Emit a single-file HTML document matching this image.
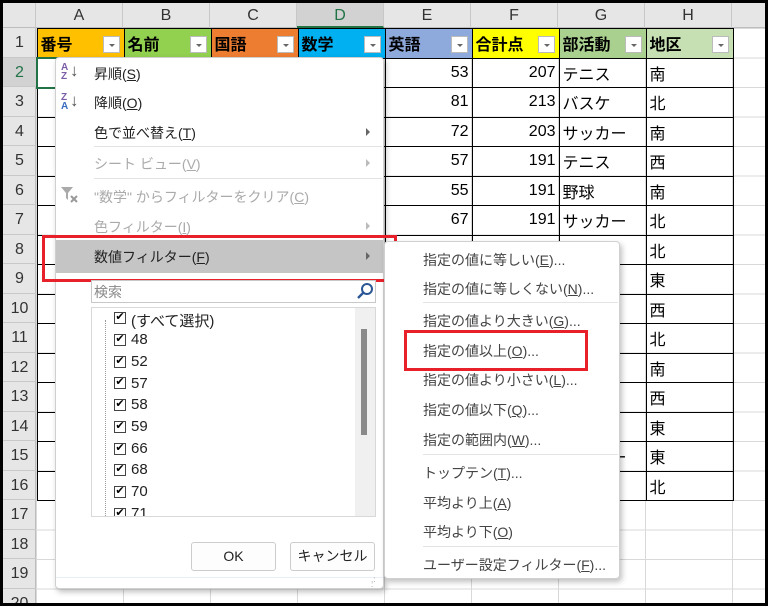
<!DOCTYPE html>
<html><head><meta charset="utf-8">
<style>
*{margin:0;padding:0;box-sizing:border-box}
body{width:768px;height:606px;overflow:hidden;background:#000;font-family:"Liberation Sans","Noto Sans CJK JP",sans-serif;position:relative}
.a{position:absolute}
#sheet{left:3px;top:3px;width:762px;height:600px;background:#fff;overflow:hidden}
#grid{left:33px;top:25px;width:740px;height:600px;
background-image:repeating-linear-gradient(to right,#d9d9d9 0 1px,transparent 1px 87px),repeating-linear-gradient(to bottom,#d9d9d9 0 1px,transparent 1px 29.5px);}
#colh{left:0;top:0;width:762px;height:25px;background:#e6e6e6;border-bottom:1px solid #bdbdbd}
.ch{position:absolute;top:0;height:25px;width:87px;text-align:center;font-size:16px;line-height:25px;color:#333;border-right:1px solid #c8c8c8}
#rowh{left:0;top:25px;width:33px;height:600px;background:#e6e6e6;border-right:1px solid #bdbdbd}
.rh{position:absolute;left:0;width:33px;height:29.5px;text-align:center;font-size:16px;line-height:29px;color:#333;border-bottom:1px solid #c8c8c8}
table{position:absolute;left:33px;top:25px;border-collapse:collapse;table-layout:fixed}
td{width:87px;height:29.5px;border:1px solid #000;font-size:16px;padding:0 3px;white-space:nowrap;overflow:hidden}
td.n{text-align:right}
tr.h td{font-weight:bold;position:relative}
.dd{position:absolute;right:4px;top:7px;width:17px;height:17px;background:#fff;border:1px solid #bbb}
.dd:after{content:"";position:absolute;left:5px;top:7px;border-left:3px solid transparent;border-right:3px solid transparent;border-top:3px solid #666}
.menu{background:#fff;border:1px solid #d0d0d0;border-radius:4px;box-shadow:2px 3px 6px rgba(0,0,0,.25)}
.mi{position:absolute;font-size:14px;color:#222;white-space:nowrap}
.g{color:#aaa}
.sep{position:absolute;height:1px;background:#e3e3e3}
.arr{position:absolute;border-top:4px solid transparent;border-bottom:4px solid transparent;border-left:4px solid #666}
.cb{position:absolute;left:114px;width:12px;height:12px;border:1px solid #444;background:#fff;font-size:11px;line-height:9px;text-align:center;color:#000}
.li{position:absolute;left:131px;font-size:15px;color:#222}
.red{position:absolute;border:3px solid #e8202a}
u{text-decoration:underline}
</style></head><body>
<div id="sheet" class="a">
<div id="grid" class="a"></div>
<div id="colh" class="a">
<div style="position:absolute;left:0;top:0;width:33px;height:25px;border-right:1px solid #c8c8c8"></div>
<div class="ch" style="left:33px">A</div><div class="ch" style="left:120px">B</div><div class="ch" style="left:207px">C</div><div class="ch" style="left:294px;background:#d2d2d2;color:#217346;border-bottom:2px solid #217346">D</div><div class="ch" style="left:381px">E</div><div class="ch" style="left:468px">F</div><div class="ch" style="left:555px">G</div><div class="ch" style="left:642px">H</div>
</div>
<div id="rowh" class="a">
<div class="rh" style="top:0">1</div><div class="rh" style="top:29.5px;background:#d2d2d2;color:#217346">2</div><div class="rh" style="top:59px">3</div><div class="rh" style="top:88.5px">4</div><div class="rh" style="top:118px">5</div><div class="rh" style="top:147.5px">6</div><div class="rh" style="top:177px">7</div><div class="rh" style="top:206.5px">8</div><div class="rh" style="top:236px">9</div><div class="rh" style="top:265.5px">10</div><div class="rh" style="top:295px">11</div><div class="rh" style="top:324.5px">12</div><div class="rh" style="top:354px">13</div><div class="rh" style="top:383.5px">14</div><div class="rh" style="top:413px">15</div><div class="rh" style="top:442.5px">16</div><div class="rh" style="top:472px">17</div><div class="rh" style="top:501.5px">18</div><div class="rh" style="top:531px">19</div><div class="rh" style="top:560.5px">20</div>
</div>
<table>
<tr class="h"><td style="background:#ffc000">番号<span class="dd"></span></td><td style="background:#92d050">名前<span class="dd"></span></td><td style="background:#ed7d31">国語<span class="dd"></span></td><td style="background:#00b0f0">数学<span class="dd"></span></td><td style="background:#8ea9db">英語<span class="dd"></span></td><td style="background:#ffff00">合計点<span class="dd"></span></td><td style="background:#a9d08e">部活動<span class="dd"></span></td><td style="background:#c6e0b4">地区<span class="dd"></span></td></tr>
<tr><td style="border:2px solid #217346"></td><td></td><td></td><td></td><td class="n">53</td><td class="n">207</td><td>テニス</td><td>南</td></tr>
<tr><td></td><td></td><td></td><td></td><td class="n">81</td><td class="n">213</td><td>バスケ</td><td>北</td></tr>
<tr><td></td><td></td><td></td><td></td><td class="n">72</td><td class="n">203</td><td>サッカー</td><td>南</td></tr>
<tr><td></td><td></td><td></td><td></td><td class="n">57</td><td class="n">191</td><td>テニス</td><td>西</td></tr>
<tr><td></td><td></td><td></td><td></td><td class="n">55</td><td class="n">191</td><td>野球</td><td>南</td></tr>
<tr><td></td><td></td><td></td><td></td><td class="n">67</td><td class="n">191</td><td>サッカー</td><td>北</td></tr>
<tr><td></td><td></td><td></td><td></td><td></td><td></td><td></td><td>北</td></tr>
<tr><td></td><td></td><td></td><td></td><td></td><td></td><td></td><td>東</td></tr>
<tr><td></td><td></td><td></td><td></td><td></td><td></td><td></td><td>西</td></tr>
<tr><td></td><td></td><td></td><td></td><td></td><td></td><td></td><td>北</td></tr>
<tr><td></td><td></td><td></td><td></td><td></td><td></td><td></td><td>南</td></tr>
<tr><td></td><td></td><td></td><td></td><td></td><td></td><td></td><td>西</td></tr>
<tr><td></td><td></td><td></td><td></td><td></td><td></td><td></td><td>東</td></tr>
<tr><td></td><td></td><td></td><td></td><td></td><td></td><td>サッカー</td><td>東</td></tr>
<tr><td></td><td></td><td></td><td></td><td></td><td></td><td></td><td>北</td></tr>
</table>
</div>

<div class="a menu" style="left:55px;top:57px;width:329px;height:532px"></div>
<div class="a" style="left:61px;top:63px;font-size:10px;line-height:9px;font-weight:bold;color:#7b5ea7">A<br>Z</div><div class="a" style="left:70px;top:61px;font-size:17px;color:#555">↓</div>
<div class="a" style="left:61px;top:93px;font-size:10px;line-height:9px;font-weight:bold;color:#7b5ea7">Z<br><span style="color:#3a6cc0">A</span></div><div class="a" style="left:70px;top:91px;font-size:17px;color:#555">↓</div>
<div class="mi" style="left:94px;top:64px">昇順(<u>S</u>)</div>
<div class="mi" style="left:94px;top:93px">降順(<u>O</u>)</div>
<div class="mi" style="left:94px;top:123px">色で並べ替え(<u>T</u>)</div><div class="arr" style="left:366px;top:128px"></div>
<div class="sep" style="left:94px;top:146px;width:288px"></div>
<div class="mi g" style="left:94px;top:154px">シート ビュー(<u>V</u>)</div><div class="arr" style="left:366px;top:159px;border-left-color:#bbb"></div>
<div class="sep" style="left:94px;top:178px;width:288px"></div>
<svg class="a" style="left:60px;top:186px" width="20" height="18" viewBox="0 0 20 18"><path d="M1 1h12l-5 6v7l-2-2V7z" fill="#aaa"/><path d="M11 10l6 6M17 10l-6 6" stroke="#999" stroke-width="2"/></svg>
<div class="mi g" style="left:94px;top:187px">"数学" からフィルターをクリア(<u>C</u>)</div>
<div class="mi g" style="left:94px;top:217px">色フィルター(<u>I</u>)</div><div class="arr" style="left:366px;top:222px;border-left-color:#bbb"></div>
<div class="a" style="left:56px;top:240px;width:327px;height:33px;background:#c5c5c5"></div>
<div class="mi" style="left:94px;top:247px">数値フィルター(<u>F</u>)</div><div class="arr" style="left:366px;top:252px"></div>
<div class="red" style="left:42px;top:235px;width:355px;height:47px"></div>
<div class="a" style="left:91px;top:280px;width:285px;height:23px;border:1px solid #c8c8c8;background:#fff"></div>
<div class="mi" style="left:94px;top:282px;color:#888">検索</div>
<svg class="a" style="left:356px;top:282px" width="18" height="18" viewBox="0 0 18 18"><circle cx="11" cy="7" r="5" fill="none" stroke="#2b5797" stroke-width="2"/><line x1="7.5" y1="10.5" x2="2" y2="16" stroke="#2b5797" stroke-width="2.4"/></svg>
<div class="a" style="left:91px;top:307px;width:285px;height:210px;border:1px solid #d8d8d8;background:#fff;overflow:hidden">
<div class="a" style="left:263px;top:0;width:20px;height:210px;background:#f0f0f0"></div>
<div class="a" style="left:269px;top:21px;width:6px;height:106px;background:#8a8a8a"></div>
<div class="a" style="left:13px;top:12px;width:0;height:200px;border-left:1px dotted #999"></div>
</div>
<div class="cb" style="top:312px">✔</div><div class="li" style="top:310px">(すべて選択)</div>
<div class="cb" style="top:334px">✔</div><div class="li" style="top:331px">48</div>
<div class="cb" style="top:356px">✔</div><div class="li" style="top:353px">52</div>
<div class="cb" style="top:377px">✔</div><div class="li" style="top:375px">57</div>
<div class="cb" style="top:399px">✔</div><div class="li" style="top:396px">58</div>
<div class="cb" style="top:421px">✔</div><div class="li" style="top:418px">59</div>
<div class="cb" style="top:443px">✔</div><div class="li" style="top:440px">66</div>
<div class="cb" style="top:464px">✔</div><div class="li" style="top:461px">68</div>
<div class="cb" style="top:486px">✔</div><div class="li" style="top:483px">70</div>
<div class="a" style="left:92px;top:508px;width:270px;height:8px;overflow:hidden"><div class="cb" style="left:22px;top:0">✔</div><div class="li" style="left:39px;top:-3px">71</div></div>
<div class="a" style="left:191px;top:542px;width:85px;height:29px;border:1px solid #ccc;border-radius:3px;background:#fdfdfd;font-size:14px;text-align:center;line-height:27px;color:#222">OK</div>
<div class="a" style="left:290px;top:542px;width:85px;height:29px;border:1px solid #ccc;border-radius:3px;background:#fdfdfd;font-size:14px;text-align:center;line-height:27px;color:#222">キャンセル</div>
<div class="a" style="left:56px;top:577px;width:327px;height:1px;background:#e8eef5"></div>
<div class="a" style="left:371px;top:577px;font-size:8px;color:#999;line-height:5px">.:<br>:</div>

<div class="a menu" style="left:384px;top:241px;width:236px;height:338px"></div>
<div class="mi" style="left:423px;top:250px;color:#444">指定の値に等しい(<u>E</u>)...</div>
<div class="mi" style="left:423px;top:279px;color:#444">指定の値に等しくない(<u>N</u>)...</div>
<div class="sep" style="left:423px;top:302px;width:195px"></div>
<div class="mi" style="left:423px;top:311px;color:#444">指定の値より大きい(<u>G</u>)...</div>
<div class="mi" style="left:423px;top:341px;color:#444">指定の値以上(<u>O</u>)...</div>
<div class="mi" style="left:423px;top:370px;color:#444">指定の値より小さい(<u>L</u>)...</div>
<div class="mi" style="left:423px;top:400px;color:#444">指定の値以下(<u>Q</u>)...</div>
<div class="mi" style="left:423px;top:430px;color:#444">指定の範囲内(<u>W</u>)...</div>
<div class="sep" style="left:423px;top:454px;width:195px"></div>
<div class="mi" style="left:423px;top:463px;color:#444">トップテン(<u>T</u>)...</div>
<div class="mi" style="left:423px;top:493px;color:#444">平均より上(<u>A</u>)</div>
<div class="mi" style="left:423px;top:522px;color:#444">平均より下(<u>O</u>)</div>
<div class="sep" style="left:423px;top:546px;width:195px"></div>
<div class="mi" style="left:423px;top:555px;color:#444">ユーザー設定フィルター(<u>F</u>)...</div>
<div class="red" style="left:404px;top:330px;width:184px;height:41px"></div>
</body></html>
